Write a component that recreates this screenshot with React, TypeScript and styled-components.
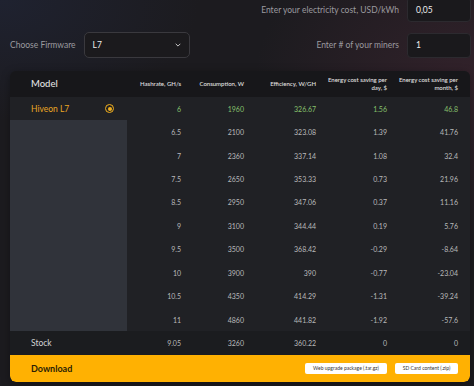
import styled, { createGlobalStyle } from "styled-components";
import { Fragment, useState } from "react";

// rows: hashrate, consumption, efficiency, saving per day, saving per month
const rows: (string | number)[][] = [
    [6, 1960, 326.67, 1.56, 46.8],
    [6.5, 2100, 323.08, 1.39, 41.76],
    [7, 2360, 337.14, 1.08, 32.4],
    [7.5, 2650, 353.33, 0.73, 21.96],
    [8.5, 2950, 347.06, 0.37, 11.16],
    [9, 3100, 344.44, 0.19, 5.76],
    [9.5, 3500, 368.42, -0.29, -8.64],
    [10, 3900, 390, -0.77, -23.04],
    [10.5, 4350, 414.29, -1.31, -39.24],
    [11, 4860, 441.82, -1.92, -57.6],
];

const stock = [9.05, 3260, 360.22, 0, 0];

const GlobalStyle = createGlobalStyle`
    html, body {
        margin: 0;
        height: 100%;
        overflow: hidden;
    }
    body {
        font-family: "Lato", "Liberation Sans", sans-serif;
        background:
            radial-gradient(ellipse 220px 170px at 100% 22%, #33222b 0%, rgba(51, 34, 43, 0) 100%),
            radial-gradient(ellipse 200px 120px at 0% 0%, #1f2230 0%, rgba(31, 34, 48, 0) 100%),
            #1c1b1f;
    }
`;

const PageWrapper = styled.div`
    margin-top: -3px;
    padding: 0 3px 0 10px;
`;

const TopRow = styled.div`
    display: flex;
    justify-content: flex-end;
    align-items: center;
    gap: 8px;
`;

const FirmwareRow = styled.div`
    display: flex;
    justify-content: space-between;
    align-items: center;
    margin-top: 10px;
`;

const Group = styled.div`
    display: flex;
    align-items: center;
    gap: 8px;
`;

const Label = styled.span`
    color: #9b9a9f;
    font-size: 8.5px;
`;

const Field = styled.div`
    box-sizing: border-box;
    width: 64px;
    height: 25px;
    display: flex;
    align-items: center;
    padding: 0 8px;
    background: #1a191c;
    border: 1px solid #2c2a2f;
    border-radius: 4px;
    color: #ececec;
    font-size: 8.5px;
`;

const Select = styled.div`
    box-sizing: border-box;
    width: 106px;
    height: 26px;
    display: flex;
    align-items: center;
    justify-content: space-between;
    padding: 0 8px;
    background: #1b1a1d;
    border: 1px solid #3a393e;
    border-radius: 5px;
    color: #ececec;
    font-size: 8.5px;
`;

const Card = styled.div`
    margin-top: 13px;
    width: 460px;
    border-radius: 6px;
    overflow: hidden;
    background: #202125;
    box-shadow: 0 2px 8px rgba(0, 0, 0, 0.35);
`;

const Grid = styled.div`
    display: grid;
    grid-template-columns: 117px 66px 63px 72px 71px 71px;
    grid-template-rows: 26px repeat(11, 23.45px);
`;

const HeadCell = styled.div<{ $left?: boolean }>`
    background: #17171a;
    display: flex;
    align-items: center;
    justify-content: ${({ $left }) => ($left ? "flex-start" : "flex-end")};
    text-align: ${({ $left }) => ($left ? "left" : "right")};
    padding: ${({ $left }) => ($left ? "0 0 0 21px" : "0 12px 0 0")};
    color: #e2e2e2;
    font-size: ${({ $left }) => ($left ? "9.5px" : "6px")};
    font-weight: 500;
    line-height: 1.35;
    white-space: nowrap;
`;

const Cell = styled.div<{ $tone: "first" | "plain" | "stock" }>`
    display: flex;
    align-items: center;
    justify-content: flex-end;
    padding-right: 12px;
    font-size: 7px;
    background: ${({ $tone }) => ($tone === "stock" ? "#1b1c1f" : "transparent")};
    color: ${({ $tone }) => ($tone === "first" ? "#86c06c" : "#b9b9bb")};
`;

const ModelCell = styled.div<{ $stock?: boolean }>`
    display: flex;
    align-items: center;
    justify-content: space-between;
    padding: 0 13px 0 21px;
    font-size: 8.5px;
    background: ${({ $stock }) => ($stock ? "#1b1c1f" : "transparent")};
    color: ${({ $stock }) => ($stock ? "#d2d2d4" : "#eaa524")};
`;

const ModelBlock = styled.div`
    grid-row: span 9;
    background: #30333a;
`;

const Radio = styled.span`
    box-sizing: border-box;
    width: 9px;
    height: 9px;
    border-radius: 50%;
    border: 1.5px solid #f2b01e;
    display: flex;
    align-items: center;
    justify-content: center;

    &::after {
        content: "";
        width: 4px;
        height: 4px;
        border-radius: 50%;
        background: #f2b01e;
    }
`;

const DownloadBar = styled.div`
    height: 27px;
    display: flex;
    align-items: center;
    justify-content: space-between;
    padding: 0 12px 0 21px;
    background: #ffb102;
    border-radius: 0 0 6px 6px;
`;

const DownloadTitle = styled.span`
    color: #2a1e05;
    font-size: 9px;
    font-weight: 700;
`;

const ButtonGroup = styled.div`
    display: flex;
    gap: 8px;
`;

const FileButton = styled.button<{ $width: number }>`
    width: ${({ $width }) => $width}px;
    height: 11px;
    padding: 0;
    border: none;
    border-radius: 2px;
    background: #ffffff;
    color: #333333;
    font-family: inherit;
    font-size: 5px;
`;

const Chevron = () => (
    <svg width="6" height="4" viewBox="0 0 6 4" fill="none">
        <path d="M0.7 0.8 3 3.1 5.3 0.8" stroke="#d8d8d8" strokeWidth="0.9" />
    </svg>
);

export default function App() {
    const [firmware] = useState("L7");

    return (
        <>
            <GlobalStyle />
            <PageWrapper>
                <TopRow>
                    <Label>Enter your electricity cost, USD/kWh</Label>
                    <Field>0,05</Field>
                </TopRow>

                <FirmwareRow>
                    <Group>
                        <Label>Choose Firmware</Label>
                        <Select>
                            {firmware}
                            <Chevron />
                        </Select>
                    </Group>
                    <Group>
                        <Label>Enter # of your miners</Label>
                        <Field>1</Field>
                    </Group>
                </FirmwareRow>

                <Card>
                    <Grid>
                        <HeadCell $left>Model</HeadCell>
                        <HeadCell>Hashrate, GH/s</HeadCell>
                        <HeadCell>Consumption, W</HeadCell>
                        <HeadCell>Efficiency, W/GH</HeadCell>
                        <HeadCell>
                            Energy cost saving per
                            <br />
                            day, $
                        </HeadCell>
                        <HeadCell>
                            Energy cost saving per
                            <br />
                            month, $
                        </HeadCell>

                        {rows.map((row, i) => (
                            <Fragment key={i}>
                                {i === 0 && (
                                    <ModelCell>
                                        Hiveon L7
                                        <Radio />
                                    </ModelCell>
                                )}
                                {i === 1 && <ModelBlock />}
                                {row.map((v, j) => (
                                    <Cell key={j} $tone={i === 0 ? "first" : "plain"}>
                                        {v}
                                    </Cell>
                                ))}
                            </Fragment>
                        ))}

                        <ModelCell $stock>Stock</ModelCell>
                        {stock.map((v, j) => (
                            <Cell key={`s-${j}`} $tone="stock">
                                {v}
                            </Cell>
                        ))}
                    </Grid>

                    <DownloadBar>
                        <DownloadTitle>Download</DownloadTitle>
                        <ButtonGroup>
                            <FileButton $width={82}>Web upgrade package (.tar.gz)</FileButton>
                            <FileButton $width={63}>SD Card content (.zip)</FileButton>
                        </ButtonGroup>
                    </DownloadBar>
                </Card>
            </PageWrapper>
        </>
    );
}
